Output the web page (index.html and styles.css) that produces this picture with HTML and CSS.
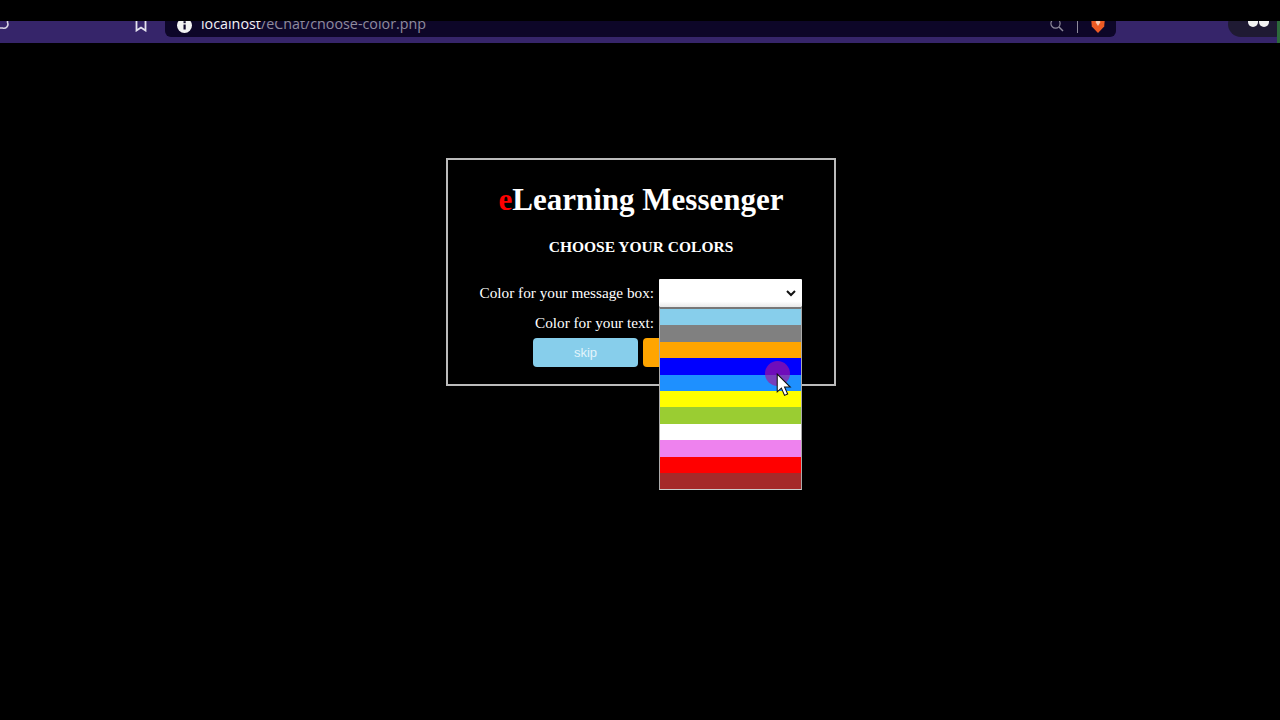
FILE: index.html
```html
<!DOCTYPE html>
<html lang="en">
<head>
    <meta charset="UTF-8">
    <title>Choose Colors</title>
    <link rel="stylesheet" href="styles.css">
</head>
<body>
    <div class="top-strip"></div>
    <div class="toolbar">
        <svg class="reload" width="10" height="12" viewBox="0 0 10 12"><path d="M7.500 0v2.500a4 4 0 0 1-5 5.500H0" fill="none" stroke="#d8d4e4" stroke-width="1.600"/></svg>
        <svg class="bookmark" width="12" height="12" viewBox="0 0 12 12"><path d="M1.500 0v10.500L6 7.500l4.500 3V0" fill="none" stroke="#e4e2ee" stroke-width="1.800"/></svg>
        <div class="url-box">
            <svg class="info" width="15" height="15" viewBox="0 0 15 15"><circle cx="7.500" cy="7.500" r="7.500" fill="#f2f2f2"/><rect x="6.500" y="6.500" width="2.200" height="5" fill="#0d0628"/><rect x="6.500" y="3.200" width="2.200" height="2" fill="#0d0628"/></svg>
            <span class="url"><span class="url-host">localhost</span>/eChat/choose-color.php</span>
            <svg class="search" width="15" height="15" viewBox="0 0 15 15"><circle cx="6.500" cy="5.500" r="4.600" fill="none" stroke="#8f8b9c" stroke-width="1.200"/><path d="M10 9l4 4" stroke="#8f8b9c" stroke-width="1.400"/></svg>
            <div class="divider"></div>
            <svg class="shield" width="16" height="16" viewBox="0 0 16 16"><path d="M1 0h14l-.8 9.500L8 16 1.800 9.500z" fill="#ee5a24"/><path d="M8 2l2.500 3L8 9 5.500 5z" fill="#f8c8b0"/></svg>
        </div>
        <div class="profile">
            <span class="blob"></span><span class="blob"></span>
        </div>
        <div class="edge"></div>
    </div>

    <div class="card">
        <h1 class="title"><span class="title-e">e</span>Learning Messenger</h1>
        <h2 class="subtitle">CHOOSE YOUR COLORS</h2>
        <form class="color-form">
            <label class="form-label">Color for your message box:</label>
            <div class="select-wrap">
                <div class="select-box">
                    <svg width="10" height="7" viewBox="0 0 10 7"><path d="M1 1l4 4 4-4" fill="none" stroke="#111" stroke-width="2"/></svg>
                </div>
                <ul class="dropdown">
                    <li class="opt skyblue"></li>
                    <li class="opt gray"></li>
                    <li class="opt orange"></li>
                    <li class="opt blue"></li>
                    <li class="opt dodgerblue"></li>
                    <li class="opt yellow"></li>
                    <li class="opt yellowgreen"></li>
                    <li class="opt white"></li>
                    <li class="opt violet"></li>
                    <li class="opt red"></li>
                    <li class="opt brown"></li>
                </ul>
            </div>
            <label class="form-label">Color for your text:</label>
            <div class="select-box select-hidden"></div>
        </form>
        <div class="buttons">
            <button type="button" class="btn btn-skip">skip</button>
            <button type="button" class="btn btn-next">next</button>
        </div>
    </div>

    <div class="click-dot"></div>
    <svg class="cursor" width="16" height="24" viewBox="0 0 15 23"><path d="M1 1v17l4-3.500 3 7 3-1.300-3-6.700h5.500z" fill="#fff" stroke="#111" stroke-width="1"/></svg>
</body>
</html>
```

FILE: styles.css
```css
body {
    margin: 0;
    height: 720px;
    overflow: hidden;
    background-color: #000;
    font-family: "Liberation Serif", serif;
    color: #fff;
}
.top-strip {
    height: 21px;
    background-color: #000;
}
.toolbar {
    position: relative;
    height: 22px;
    overflow: hidden;
    background-color: #36256a;
}
.reload {
    position: absolute;
    left: 0;
    top: -1px;
}
.bookmark {
    position: absolute;
    left: 135px;
    top: -1px;
}
.url-box {
    position: absolute;
    left: 165px;
    top: -8px;
    display: flex;
    align-items: center;
    width: 951px;
    height: 24px;
    box-sizing: border-box;
    padding: 0 10px 0 12px;
    border-radius: 0 0 6px 6px;
    background-color: #0d0628;
}
.url {
    margin: -4px 0 0 9px;
    font-family: "Open Sans", sans-serif;
    font-size: 14.300px;
    color: #8f8b9c;
    flex: 1;
}
.url-host {
    color: #f2f2f2;
}
.search {
    margin-right: 13px;
}
.divider {
    width: 1px;
    height: 15px;
    margin-right: 12px;
    background-color: #8f8b9c;
}
.profile {
    position: absolute;
    left: 1228px;
    top: -10px;
    display: flex;
    justify-content: center;
    gap: 1px;
    width: 60px;
    height: 26px;
    padding-top: 9px;
    box-sizing: border-box;
    border-radius: 13px;
    background-color: #1f1a33;
}
.blob {
    width: 10px;
    height: 7px;
    border-radius: 0 0 5px 5px;
    background-color: #f2f2f2;
}
.edge {
    position: absolute;
    right: 0;
    top: 0;
    width: 3px;
    height: 22px;
    background-color: #2c6a3a;
}
.card {
    box-sizing: border-box;
    width: 390px;
    height: 228px;
    margin: 115px 0 0 446px;
    padding-top: 22px;
    border: 2px solid #bbb;
}
.title {
    margin: 0;
    font-size: 31px;
    line-height: 36px;
    text-align: center;
}
.title-e {
    color: #f00;
}
.subtitle {
    margin: 20px 0 0;
    font-size: 15.500px;
    line-height: 18px;
    text-align: center;
}
.color-form {
    display: grid;
    grid-template-columns: 206px 143px;
    column-gap: 5px;
    row-gap: 2px;
    margin-top: 23px;
    align-items: center;
}
.form-label {
    font-size: 15.250px;
    text-align: right;
}
.select-wrap {
    position: relative;
}
.select-box {
    display: flex;
    align-items: center;
    justify-content: flex-end;
    box-sizing: border-box;
    height: 28px;
    padding-right: 6px;
    border-radius: 1px;
    background: linear-gradient(#fff 80%, #e8e8e8);
}
.select-hidden {
    visibility: hidden;
}
.dropdown {
    position: absolute;
    left: 0;
    top: 28px;
    z-index: 2;
    box-sizing: border-box;
    width: 143px;
    margin: 0;
    padding: 0;
    list-style-type: none;
    border-top: 2px solid #777;
    border-bottom: 1px solid #ccc;
    border-left: 1px solid #aaa;
    border-right: 1px solid #aaa;
}
.opt {
    height: 16.400px;
}
.skyblue { background-color: #87ceeb; }
.gray { background-color: #808080; }
.orange { background-color: #ffa500; }
.blue { background-color: #00f; }
.dodgerblue { background-color: #1e90ff; }
.yellow { background-color: #ff0; }
.yellowgreen { background-color: #9acd32; }
.white { background-color: #fff; }
.violet { background-color: #ee82ee; }
.red { background-color: #f00; }
.brown { background-color: #a52a2a; }
.buttons {
    display: flex;
    gap: 5px;
    margin: 1px 0 0 85px;
}
.btn {
    width: 105px;
    height: 29px;
    border: none;
    border-radius: 4px;
    font-family: "Liberation Sans", sans-serif;
    font-size: 13px;
    color: #e3f4fb;
}
.btn-skip {
    background-color: #87ceeb;
}
.btn-next {
    background-color: #ffa500;
}
.click-dot {
    position: absolute;
    left: 765px;
    top: 361px;
    z-index: 3;
    width: 25px;
    height: 25px;
    border-radius: 50%;
    background-color: rgba(170, 20, 150, 0.65);
}
.cursor {
    position: absolute;
    left: 776px;
    top: 373px;
    z-index: 4;
}
```
